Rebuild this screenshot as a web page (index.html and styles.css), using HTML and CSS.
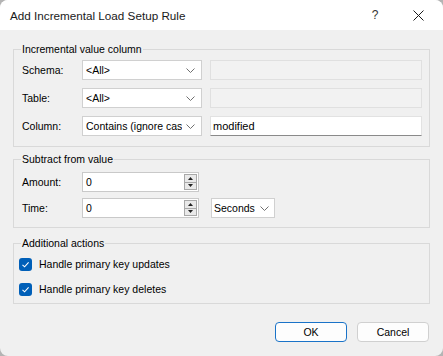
FILE: index.html
```html
<!DOCTYPE html>
<html lang="en">
<head>
    <meta charset="UTF-8">
    <title>Add Incremental Load Setup Rule</title>
    <link rel="stylesheet" href="styles.css">
</head>
<body>
    <div class="dialog">
        <div class="titlebar">
            <span class="title">Add Incremental Load Setup Rule</span>
            <span class="help">?</span>
            <span class="close">
                <svg width="11" height="11" viewBox="0 0 11 11"><path d="M0.5 0.5 L10.5 10.5 M10.5 0.5 L0.5 10.5" stroke="#1a1a1a" stroke-width="1" fill="none"/></svg>
            </span>
        </div>

        <div class="content">
            <!-- Incremental value column -->
            <fieldset class="group group-column">
                <legend>Incremental value column</legend>
                <div class="row">
                    <span class="lbl">Schema:</span>
                    <div class="combo"><span class="combo-text">&lt;All&gt;</span><svg class="chev" width="9" height="5" viewBox="0 0 9 5"><polyline points="0.5,0.5 4.5,4.5 8.5,0.5" stroke="#707070" fill="none"/></svg></div>
                    <div class="textbox disabled"></div>
                </div>
                <div class="row">
                    <span class="lbl">Table:</span>
                    <div class="combo"><span class="combo-text">&lt;All&gt;</span><svg class="chev" width="9" height="5" viewBox="0 0 9 5"><polyline points="0.5,0.5 4.5,4.5 8.5,0.5" stroke="#707070" fill="none"/></svg></div>
                    <div class="textbox disabled"></div>
                </div>
                <div class="row">
                    <span class="lbl">Column:</span>
                    <div class="combo"><span class="combo-text">Contains (ignore case)</span><svg class="chev" width="9" height="5" viewBox="0 0 9 5"><polyline points="0.5,0.5 4.5,4.5 8.5,0.5" stroke="#707070" fill="none"/></svg></div>
                    <div class="textbox">modified</div>
                </div>
            </fieldset>

            <!-- Subtract from value -->
            <fieldset class="group group-subtract">
                <legend>Subtract from value</legend>
                <div class="row">
                    <span class="lbl">Amount:</span>
                    <div class="spin">
                        <span class="spin-text">0</span>
                        <div class="spin-btns">
                            <span class="spin-btn"><svg width="5" height="3" viewBox="0 0 5 3"><polygon points="2.5,0 5,3 0,3" fill="#222"/></svg></span>
                            <span class="spin-btn"><svg width="5" height="3" viewBox="0 0 5 3"><polygon points="0,0 5,0 2.5,3" fill="#222"/></svg></span>
                        </div>
                    </div>
                </div>
                <div class="row">
                    <span class="lbl">Time:</span>
                    <div class="spin">
                        <span class="spin-text">0</span>
                        <div class="spin-btns">
                            <span class="spin-btn"><svg width="5" height="3" viewBox="0 0 5 3"><polygon points="2.5,0 5,3 0,3" fill="#222"/></svg></span>
                            <span class="spin-btn"><svg width="5" height="3" viewBox="0 0 5 3"><polygon points="0,0 5,0 2.5,3" fill="#222"/></svg></span>
                        </div>
                    </div>
                    <div class="combo combo-unit"><span class="combo-text">Seconds</span><svg class="chev" width="9" height="5" viewBox="0 0 9 5"><polyline points="0.5,0.5 4.5,4.5 8.5,0.5" stroke="#707070" fill="none"/></svg></div>
                </div>
            </fieldset>

            <!-- Additional actions -->
            <fieldset class="group group-actions">
                <legend>Additional actions</legend>
                <div class="row">
                    <span class="check"><svg width="13" height="13" viewBox="0 0 13 13"><polyline points="3.5,6.8 5.6,8.8 9.6,4.4" stroke="#fff" stroke-width="1.1" fill="none"/></svg></span>
                    <span class="check-label">Handle primary key updates</span>
                </div>
                <div class="row">
                    <span class="check"><svg width="13" height="13" viewBox="0 0 13 13"><polyline points="3.5,6.8 5.6,8.8 9.6,4.4" stroke="#fff" stroke-width="1.1" fill="none"/></svg></span>
                    <span class="check-label">Handle primary key deletes</span>
                </div>
            </fieldset>

            <div class="buttons">
                <button class="btn btn-default">OK</button>
                <button class="btn">Cancel</button>
            </div>
        </div>
    </div>
</body>
</html>
```

FILE: styles.css
```css
* {
    margin: 0;
    padding: 0;
    box-sizing: border-box;
}

html {
    background: #b4b4b4;
}

body {
    width: 443px;
    height: 356px;
    font-family: 'Liberation Sans', Arial, sans-serif;
    font-size: 10.5px;
    color: #000;
}

.dialog {
    width: 443px;
    height: 356px;
    background: #f0f0f0;
    border-radius: 8px;
    overflow: hidden;
}

.titlebar {
    height: 30px;
    background: #fff;
    display: flex;
    align-items: center;
}

.title {
    padding-left: 10px;
    font-size: 11.7px;
    color: #1a1a1a;
}

.help {
    margin-left: auto;
    width: 30px;
    margin-right: 5px;
    text-align: center;
    font-size: 12px;
    color: #333;
}

.close {
    width: 46px;
    margin-right: 2px;
    display: flex;
    justify-content: center;
}

.content {
    padding: 0 13px;
}

.group {
    border: 1px solid #d9d9d9;
    padding: 0 7px 0 8px;
}

.group legend {
    line-height: 13px;
    padding: 0 1px;
    margin-left: -1px;
    color: #000;
}

.group-column {
    margin-top: 13px;
    padding-top: 4px;
    padding-bottom: 10px;
}

.group-subtract {
    margin-top: 6px;
    padding-top: 6px;
    padding-bottom: 9px;
}

.group-actions {
    margin-top: 9px;
    padding-top: 4px;
    padding-bottom: 4px;
}

.row {
    display: flex;
    align-items: center;
    height: 20px;
}

.group-column .row + .row {
    margin-top: 8px;
}

.group-subtract .row + .row {
    margin-top: 6px;
}

.group-actions .row + .row {
    margin-top: 5px;
}

.lbl {
    width: 60px;
    flex-shrink: 0;
}

.combo {
    width: 120px;
    height: 20px;
    flex-shrink: 0;
    margin-right: 8px;
    background: #fff;
    border: 1px solid #d0d0d0;
    display: flex;
    align-items: center;
    padding: 0 6px 0 3px;
}

.combo-text {
    flex: 1;
    white-space: nowrap;
    overflow: hidden;
    margin-right: 4px;
}

.chev {
    flex-shrink: 0;
}

.combo-unit {
    width: 64px;
    margin-left: 12px;
    margin-right: 0;
    padding: 0 5px 0 2px;
}

.combo-unit .combo-text {
    overflow: visible;
    margin-right: 2px;
}

.textbox {
    flex: 1;
    height: 20px;
    background: #fff;
    border: 1px solid #e2e2e2;
    border-bottom-color: #8a8a8a;
    padding: 0 2px;
    line-height: 18px;
    font-size: 11px;
}

.textbox.disabled {
    background: #f2f2f2;
    border-color: #e0e0e0;
}

.spin {
    width: 117px;
    height: 20px;
    background: #fff;
    border: 1px solid #c9c9c9;
    display: flex;
    align-items: center;
    padding: 1px 1px 1px 3px;
}

.spin-text {
    flex: 1;
}

.spin-btns {
    width: 13px;
    height: 16px;
    display: flex;
    flex-direction: column;
}

.spin-btn {
    flex: 1;
    background: #e9e9e9;
    border: 1px solid #a8a8a8;
    display: flex;
    align-items: center;
    justify-content: center;
}

.spin-btn + .spin-btn {
    border-top: none;
}

.check {
    width: 13px;
    height: 13px;
    margin-left: -3px;
    margin-right: 7px;
    background: #005fb8;
    border-radius: 3px;
    display: flex;
}

.buttons {
    display: flex;
    justify-content: flex-end;
    gap: 10px;
    margin-top: 18px;
    padding-right: 1px;
}

.btn {
    width: 72px;
    height: 20px;
    font-family: 'Liberation Sans', Arial, sans-serif;
    font-size: 10.5px;
    color: #000;
    background: #fdfdfd;
    border: 1px solid #d0d0d0;
    border-radius: 4px;
    cursor: pointer;
}

.btn-default {
    border-color: #1a73c8;
}
```
